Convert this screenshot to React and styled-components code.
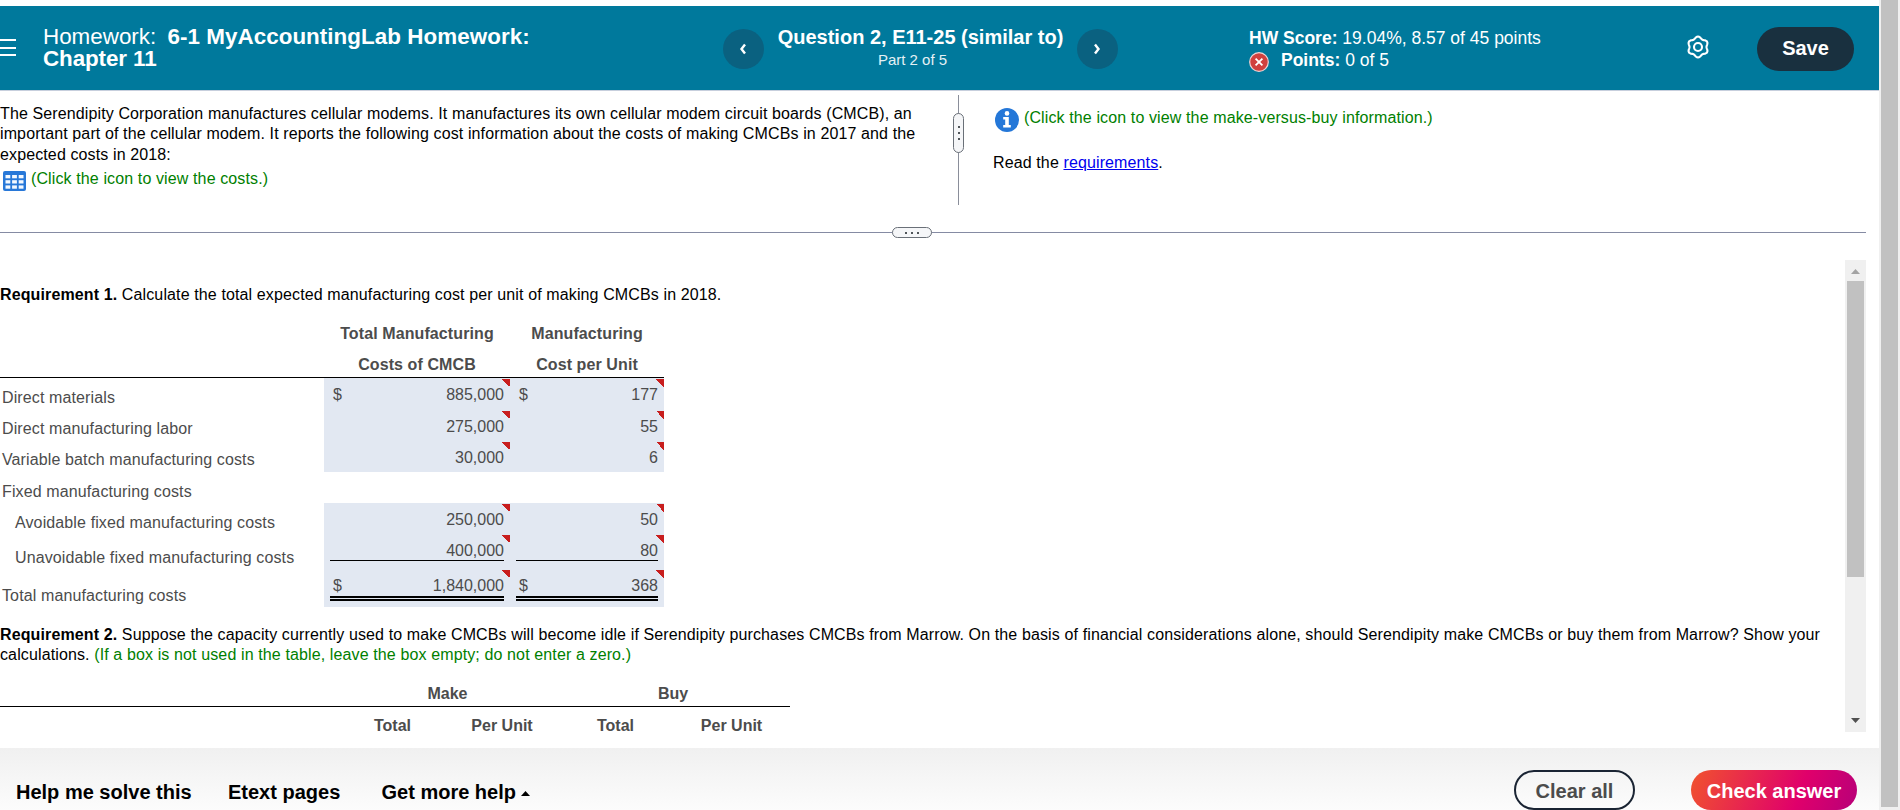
import React from "react";
import styled, { createGlobalStyle } from "styled-components";

const GlobalStyle = createGlobalStyle`
  * {
    box-sizing: border-box;
  }

  body {
    margin: 0;
    overflow: hidden;
    background: #ffffff;
    color: #000000;
    font-family: "Liberation Sans", Arial, sans-serif;
    font-size: 16px;
  }

  p {
    margin: 0;
  }

  button {
    padding: 0;
    border: 0;
    background: none;
    font-family: inherit;
  }
`;

const Window = styled.div`
  display: flex;
  height: 810px;
  overflow: hidden;
`;

const Page = styled.div`
  display: flex;
  flex-direction: column;
  width: 1879px;
  padding-top: 6px;
`;

const PageScrollbar = styled.div`
  width: 21px;
  padding: 0 2px 3px;
  background: #f0f0f0;
`;

const PageThumb = styled.div`
  height: 100%;
  background: #c1c1c1;
`;

// header

const Header = styled.header`
  display: grid;
  grid-template-columns: 43px 680px 526px 437px 71px 97px;
  height: 85px;
  background: #00799c;
  border-bottom: 1px solid #c7cfdd;
  color: #ffffff;
`;

const MenuIcon = styled.div`
  width: 16px;
  height: 17px;
  margin-top: 33px;
  display: flex;
  flex-direction: column;
  justify-content: space-between;

  span {
    height: 2px;
    background: #ffffff;
  }
`;

const Title = styled.div`
  width: 520px;
  padding-top: 20px;
  font-size: 22.4px;
  line-height: 22.4px;

  b {
    margin-left: 5px;
    letter-spacing: 0.05px;
  }

  strong {
    letter-spacing: -0.1px;
  }
`;

const QuestionNav = styled.div`
  display: flex;
  width: 395px;
  justify-content: space-between;
`;

const NavButton = styled.button`
  display: flex;
  justify-content: center;
  align-items: center;
  width: 41px;
  height: 40px;
  margin-top: 23px;
  padding-right: 2px;
  border-radius: 50%;
  background: #0a6180;
`;

const QuestionText = styled.div`
  padding-top: 19px;
  text-align: center;
  white-space: nowrap;
`;

const QuestionName = styled.div`
  font-size: 20px;
  font-weight: bold;
  line-height: 24px;
`;

const QuestionPart = styled.div`
  padding: 1px 16px 0 0;
  font-size: 15px;
  line-height: 20px;
  color: #e5f1f5;
`;

const Score = styled.div`
  padding-top: 21px;
  font-size: 17.5px;
  line-height: 22px;
  white-space: nowrap;
`;

const PointsRow = styled.div`
  display: flex;
  gap: 12px;

  svg {
    margin-top: 3px;
  }
`;

const Settings = styled.div`
  padding-top: 29px;
`;

const SaveButton = styled.button`
  width: 97px;
  height: 44px;
  margin-top: 21px;
  padding-bottom: 2px;
  border-radius: 22px;
  background: #19303f;
  color: #ffffff;
  font-size: 20px;
  font-weight: bold;
`;

// problem statement

const Problem = styled.section`
  display: flex;
  height: 136px;
  letter-spacing: 0.12px;
`;

const Statement = styled.div`
  width: 953px;
  padding-top: 12.5px;
  line-height: 20.5px;
  white-space: nowrap;
`;

const IconLine = styled.div`
  display: flex;
  gap: 5px;
  padding: ${(props) => props.$top || "0"} 0 0 3px;
  line-height: 20px;
  color: #008000;

  svg {
    margin-top: ${(props) => props.$drop || "0"};
  }
`;

const ColumnSplitter = styled.div`
  width: 11px;
  height: 110px;
  margin-top: 4px;
  padding-top: 18px;
  background: linear-gradient(#8a8e9a, #8a8e9a) 5px 0 / 1px 100% no-repeat;
`;

const Handle = styled.div`
  display: flex;
  flex-direction: ${(props) => (props.$vertical ? "column" : "row")};
  justify-content: center;
  align-items: center;
  gap: 4px;
  width: ${(props) => (props.$vertical ? "11px" : "40px")};
  height: ${(props) => (props.$vertical ? "40px" : "11px")};
  border: 1px solid #6a7078;
  border-radius: 6px;
  background: #f5f6f8;

  span {
    width: 2px;
    height: 2px;
    background: #505559;
  }
`;

const Resources = styled.div`
  padding: 17px 0 0 28px;
`;

const ReadLine = styled.p`
  padding: 21px 0 0 1px;
  line-height: 20px;

  a {
    color: #0000ee;
    text-decoration: underline;
  }
`;

const RowSplitter = styled.div`
  display: flex;
  justify-content: center;
  width: 1866px;
  height: 11px;
  padding-right: 42px;
  background: linear-gradient(#858ba3, #858ba3) 0 5px / 100% 1px no-repeat;
`;

// worksheet

const Worksheet = styled.section`
  display: flex;
  height: 510px;
  padding-top: 22px;
`;

const Work = styled.div`
  width: 1845px;
`;

const Paragraph = styled.p`
  padding-top: ${(props) => props.$top};
  line-height: 20px;
  white-space: nowrap;
  letter-spacing: 0.122px;
`;

const Green = styled.span`
  color: #008000;
`;

const CostTable = styled.div`
  width: 664px;
  padding-top: 13px;
  color: #4c4c4c;
`;

const CostHead = styled.div`
  display: grid;
  grid-template-columns: 324px 186px 154px;
  height: 60px;
  border-bottom: 1px solid #000000;
  font-weight: bold;
  line-height: 31px;
  text-align: center;
  letter-spacing: 0.1px;
`;

const CostRow = styled.div`
  display: grid;
  grid-template-columns: 324px 186px 154px;
  height: ${(props) => props.$height}px;
`;

const Label = styled.div`
  align-self: end;
  padding: 0 0 ${(props) => (props.$raised ? "3px" : "2px")} ${(props) => (props.$indent ? "15px" : "2px")};
  line-height: 18px;
  letter-spacing: 0.12px;
  white-space: nowrap;
`;

const Cell = styled.div`
  padding: ${(props) => (props.$rule === "double" ? "6px" : "7px")} 6px 0;
  background: #e2e8f2;
  background-image: linear-gradient(to top right, transparent 50%, #c81e1e 50%);
  background-size: 8px 8px;
  background-position: right 0 top 1px;
  background-repeat: no-repeat;
`;

const rules = {
  single: "1px solid #000000",
  double: "5px double #000000",
};

const Amount = styled.div`
  display: flex;
  justify-content: space-between;
  padding: 0 0 0 3px;
  line-height: ${(props) => (props.$rule === "double" ? "21px" : "20px")};
  height: ${(props) => (props.$rule === "single" ? "20px" : "auto")};
  border-bottom: ${(props) => rules[props.$rule] || "0"};
`;

const DecisionTable = styled.div`
  display: grid;
  grid-template-columns: 339px 107px 112px 115px 117px;
  width: 790px;
  padding-top: 15px;
  color: #4c4c4c;
  font-weight: bold;
  line-height: 30px;
  text-align: center;
`;

const GroupHead = styled.div`
  grid-column: span ${(props) => props.$span};
  height: 27px;
  padding-right: ${(props) => (props.$span > 1 ? "2px" : "0")};
  line-height: 28px;
  border-bottom: 1px solid #000000;
`;

const ColumnHead = styled.div`
  padding-top: 4px;
`;

const Scrollbar = styled.div`
  display: flex;
  flex-direction: column;
  justify-content: space-between;
  width: 21px;
  height: 472px;
  padding: 0 2px;
  background: #f0f0f0;
`;

const Thumb = styled.div`
  height: 296px;
  background: #c1c1c1;
`;

const Arrow = styled.div`
  display: flex;
  justify-content: center;
  padding: ${(props) => (props.$up ? "9px 0 7px" : "0 0 9px")};
`;

// footer

const Footer = styled.footer`
  display: flex;
  height: 62px;
  padding: 22px 22px 0 16px;
  background: linear-gradient(#f0f0f0, #fcfcfc);
`;

const HelpLinks = styled.nav`
  display: grid;
  grid-template-columns: 212px 153.5px 200px;
  flex: 1;
  font-size: 20px;
  font-weight: bold;
  line-height: 44px;
  white-space: nowrap;

  svg {
    margin: 0 0 3px 5px;
  }
`;

const ClearButton = styled.button`
  width: 121px;
  height: 40px;
  border: 2px solid #1a2433;
  border-radius: 20px;
  color: #4c4c4c;
  font-size: 20px;
  font-weight: bold;
  line-height: 38px;
`;

const CheckButton = styled.button`
  width: 166px;
  height: 40px;
  margin-left: 56px;
  border-radius: 20px;
  background: linear-gradient(110deg, #f05030 2%, #e0006b 65%, #bd0077 95%);
  color: #ffffff;
  font-size: 20px;
  font-weight: bold;
  line-height: 42px;
`;

const costs = [
  { label: "Direct materials", height: 32, raised: true, total: "885,000", unit: "177", dollar: true },
  { label: "Direct manufacturing labor", height: 31, raised: true, total: "275,000", unit: "55" },
  { label: "Variable batch manufacturing costs", height: 31, raised: true, total: "30,000", unit: "6" },
  { label: "Fixed manufacturing costs", height: 31 },
  { label: "Avoidable fixed manufacturing costs", height: 31, indent: true, total: "250,000", unit: "50" },
  { label: "Unavoidable fixed manufacturing costs", height: 35, indent: true, total: "400,000", unit: "80", rule: "single" },
  { label: "Total manufacturing costs", height: 38, total: "1,840,000", unit: "368", dollar: true, rule: "double" },
];

const Chevron = ({ d }) => (
  <svg width="10" height="12" viewBox="0 0 10 12" fill="none" stroke="#ffffff" strokeWidth="2.4">
    <path d={d} />
  </svg>
);

const WrongIcon = () => (
  <svg width="20" height="20" viewBox="0 0 20 20">
    <circle cx="10" cy="10" r="9.3" fill="#d0413f" stroke="#f0d5d5" strokeWidth="1.2" />
    <path d="M6.6 6.6l6.8 6.8M13.4 6.6l-6.8 6.8" stroke="#ffffff" strokeWidth="1.8" />
  </svg>
);

// six rounded teeth, first one pointing up
const gearPoints = Array.from({ length: 72 }, (_, i) => {
  const angle = (i * Math.PI) / 36;
  const radius = 9.5 + Math.cos(6 * angle);
  return `${(12 + radius * Math.sin(angle)).toFixed(2)},${(12 - radius * Math.cos(angle)).toFixed(2)}`;
}).join(" ");

const GearIcon = () => (
  <svg width="24" height="24" viewBox="0 0 24 24" fill="none" stroke="#ffffff" strokeWidth="2.1" strokeLinejoin="round">
    <polygon points={gearPoints} />
    <circle cx="12" cy="12" r="4" />
  </svg>
);

const GridIcon = () => (
  <svg width="23" height="20" viewBox="0 0 23 20">
    <rect width="23" height="20" rx="2" fill="#2878d8" />
    {[0, 1, 2].map((row) =>
      [0, 1, 2].map((col) => (
        <rect key={`${row}${col}`} x={2.5 + col * 6.6} y={4 + row * 5.2} width="4.8" height="3.3" fill="#f4f9ff" />
      ))
    )}
  </svg>
);

const InfoIcon = () => (
  <svg width="24" height="24" viewBox="0 0 24 24">
    <circle cx="12" cy="12" r="12" fill="#2477d8" />
    <circle cx="12" cy="5.4" r="2.3" fill="#ffffff" />
    <path d="M8.2 9h5.6v8h2v2.4H8.2V17h2v-5.6h-2z" fill="#ffffff" />
  </svg>
);

const Triangle = ({ color, d }) => (
  <svg width="9" height="5" viewBox="0 0 9 5" fill={color}>
    <path d={d} />
  </svg>
);

const UP = "M0 5L4.5 0L9 5Z";
const DOWN = "M0 0H9L4.5 5Z";

const CostCell = ({ value, dollar, rule }) => {
  if (!value) {
    return <div />;
  }
  return (
    <Cell $rule={rule}>
      <Amount $rule={rule}>
        <span>{dollar ? "$" : ""}</span>
        <span>{value}</span>
      </Amount>
    </Cell>
  );
};

const App = () => {
  return (
    <Window>
      <GlobalStyle />
      <Page>
        <Header>
          <MenuIcon>
            <span />
            <span />
            <span />
          </MenuIcon>
          <Title>
            Homework: <b>6-1 MyAccountingLab Homework:</b>
            <br />
            <strong>Chapter 11</strong>
          </Title>
          <QuestionNav>
            <NavButton aria-label="Previous question">
              <Chevron d="M7 1.5L3.5 6L7 10.5" />
            </NavButton>
            <QuestionText>
              <QuestionName>Question 2, E11-25 (similar to)</QuestionName>
              <QuestionPart>Part 2 of 5</QuestionPart>
            </QuestionText>
            <NavButton aria-label="Next question">
              <Chevron d="M3 1.5L6.5 6L3 10.5" />
            </NavButton>
          </QuestionNav>
          <Score>
            <div>
              <b>HW Score:</b> 19.04%, 8.57 of 45 points
            </div>
            <PointsRow>
              <WrongIcon />
              <span>
                <b>Points:</b> 0 of 5
              </span>
            </PointsRow>
          </Score>
          <Settings>
            <GearIcon />
          </Settings>
          <SaveButton>Save</SaveButton>
        </Header>

        <Problem>
          <Statement>
            <p>The Serendipity Corporation manufactures cellular modems. It manufactures its own cellular modem circuit boards (CMCB), an</p>
            <p>important part of the cellular modem. It reports the following cost information about the costs of making CMCBs in 2017 and the</p>
            <p>expected costs in 2018:</p>
            <IconLine $top="4px" $drop="2px">
              <GridIcon />
              <span>(Click the icon to view the costs.)</span>
            </IconLine>
          </Statement>
          <ColumnSplitter>
            <Handle $vertical>
              <span />
              <span />
              <span />
            </Handle>
          </ColumnSplitter>
          <Resources>
            <IconLine>
              <InfoIcon />
              <span>(Click the icon to view the make-versus-buy information.)</span>
            </IconLine>
            <ReadLine>
              Read the <a>requirements</a>.
            </ReadLine>
          </Resources>
        </Problem>

        <RowSplitter>
          <Handle>
            <span />
            <span />
            <span />
          </Handle>
        </RowSplitter>

        <Worksheet>
          <Work>
            <Paragraph $top="25px">
              <b>Requirement 1.</b> Calculate the total expected manufacturing cost per unit of making CMCBs in 2018.
            </Paragraph>
            <CostTable>
              <CostHead>
                <div />
                <div>
                  Total Manufacturing
                  <br />
                  Costs of CMCB
                </div>
                <div>
                  Manufacturing
                  <br />
                  Cost per Unit
                </div>
              </CostHead>
              {costs.map((cost) => (
                <CostRow key={cost.label} $height={cost.height}>
                  <Label $indent={cost.indent} $raised={cost.raised}>
                    {cost.label}
                  </Label>
                  <CostCell value={cost.total} dollar={cost.dollar} rule={cost.rule} />
                  <CostCell value={cost.unit} dollar={cost.dollar} rule={cost.rule} />
                </CostRow>
              ))}
            </CostTable>
            <Paragraph $top="18px">
              <b>Requirement 2.</b> Suppose the capacity currently used to make CMCBs will become idle if Serendipity purchases CMCBs from Marrow. On the basis of financial considerations alone, should Serendipity make CMCBs or buy them from Marrow? Show your
              <br />
              calculations. <Green>(If a box is not used in the table, leave the box empty; do not enter a zero.)</Green>
            </Paragraph>
            <DecisionTable>
              <GroupHead $span={1} />
              <GroupHead $span={2}>Make</GroupHead>
              <GroupHead $span={2}>Buy</GroupHead>
              <div />
              <ColumnHead>Total</ColumnHead>
              <ColumnHead>Per Unit</ColumnHead>
              <ColumnHead>Total</ColumnHead>
              <ColumnHead>Per Unit</ColumnHead>
            </DecisionTable>
          </Work>
          <Scrollbar>
            <div>
              <Arrow $up>
                <Triangle color="#a3a3a3" d={UP} />
              </Arrow>
              <Thumb />
            </div>
            <Arrow>
              <Triangle color="#505050" d={DOWN} />
            </Arrow>
          </Scrollbar>
        </Worksheet>

        <Footer>
          <HelpLinks>
            <span>Help me solve this</span>
            <span>Etext pages</span>
            <span>
              Get more help
              <Triangle color="#000000" d={UP} />
            </span>
          </HelpLinks>
          <ClearButton>Clear all</ClearButton>
          <CheckButton>Check answer</CheckButton>
        </Footer>
      </Page>
      <PageScrollbar>
        <PageThumb />
      </PageScrollbar>
    </Window>
  );
};

export default App;
